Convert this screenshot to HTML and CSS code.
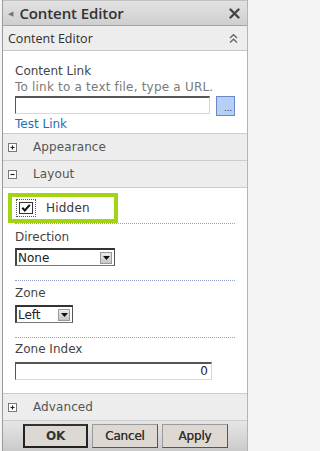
FILE: index.html
```html
<!DOCTYPE html>
<html>
<head>
<meta charset="utf-8">
<link rel="stylesheet" href="styles.css">
</head>
<body>
<div class="pane">
  <div class="titlebar">
    <span class="back">&#9664;</span>
    <span class="title">Content Editor</span>
    <svg class="close" width="11" height="11" viewBox="0 0 11 11"><path d="M1.5 1.5 L9.5 9.5 M9.5 1.5 L1.5 9.5" stroke="#444" stroke-width="2.4" stroke-linecap="round"/></svg>
  </div>
  <div class="sechead">
    <span class="sectitle">Content Editor</span>
    <svg class="chev" width="9" height="11" viewBox="0 0 9 11"><path d="M1 5 L4.5 1.8 L8 5 M1 9.5 L4.5 6.3 L8 9.5" stroke="#666" stroke-width="1.4" fill="none"/></svg>
  </div>
  <div class="content">
    <div class="label">Content Link</div>
    <div class="hint">To link to a text file, type a URL.</div>
    <div class="linkrow">
      <div class="textbox wide"></div>
      <div class="browse">...</div>
    </div>
    <div class="testlink">Test Link</div>
  </div>
  <div class="group top">
    <span class="expander">
      <svg width="9" height="9" viewBox="0 0 9 9"><rect x="0.5" y="0.5" width="8" height="8" fill="#fff" stroke="#777"/><path d="M2.5 4.5 H6.5 M4.5 2.5 V6.5" stroke="#222" stroke-width="1.2"/></svg>
    </span>
    <span class="gtitle">Appearance</span>
  </div>
  <div class="group">
    <span class="expander">
      <svg width="9" height="9" viewBox="0 0 9 9"><rect x="0.5" y="0.5" width="8" height="8" fill="#fff" stroke="#777"/><path d="M2.5 4.5 H6.5" stroke="#222" stroke-width="1.2"/></svg>
    </span>
    <span class="gtitle">Layout</span>
  </div>
  <div class="layout">
    <div class="hilite">
      <span class="cbfocus">
        <svg width="14" height="12" viewBox="0 0 14 12"><rect x="0.5" y="0.5" width="13" height="11" fill="#fff" stroke="#333"/><path d="M3.3 5.8 L5.8 8.5 L10.8 2.8" stroke="#111" stroke-width="2" fill="none"/></svg>
      </span>
      <span class="cblabel">Hidden</span>
    </div>
    <div class="dots first"></div>
    <div class="label l-direction">Direction</div>
    <div class="select sel-direction">
      <span class="selval">None</span>
      <span class="selbtn"><svg width="7" height="4" viewBox="0 0 7 4"><path d="M0 0 H7 L3.5 4 Z" fill="#111"/></svg></span>
    </div>
    <div class="dots"></div>
    <div class="label l-zone">Zone</div>
    <div class="select sel-zone">
      <span class="selval">Left</span>
      <span class="selbtn"><svg width="7" height="4" viewBox="0 0 7 4"><path d="M0 0 H7 L3.5 4 Z" fill="#111"/></svg></span>
    </div>
    <div class="dots"></div>
    <div class="label l-index">Zone Index</div>
    <div class="textbox index">0</div>
  </div>
  <div class="group top">
    <span class="expander">
      <svg width="9" height="9" viewBox="0 0 9 9"><rect x="0.5" y="0.5" width="8" height="8" fill="#fff" stroke="#777"/><path d="M2.5 4.5 H6.5 M4.5 2.5 V6.5" stroke="#222" stroke-width="1.2"/></svg>
    </span>
    <span class="gtitle">Advanced</span>
  </div>
  <div class="footer">
    <button class="btn ok">OK</button>
    <button class="btn cancel">Cancel</button>
    <button class="btn apply">Apply</button>
  </div>
</div>
</body>
</html>
```
FILE: styles.css
```css
html, body {
  margin: 0;
  padding: 0;
  background: #f4f4f4;
}
body {
  width: 250px;
  height: 451px;
  overflow: hidden;
  font-family: "DejaVu Sans", Verdana, sans-serif;
  color: #3b3b3b;
}
.pane {
  margin-left: 2px;
  width: 244px;
  height: 451px;
  background: #fff;
  border-left: 1px solid #9a9a9a;
  border-right: 1px solid #b4b4b4;
  display: flex;
  flex-direction: column;
}
.titlebar {
  height: 24px;
  background: linear-gradient(#e2e2e2, #cfcfcf);
  border-top: 1px solid #c0c0c0;
  border-bottom: 1px solid #a4a4a4;
  display: flex;
  align-items: center;
  padding-left: 5px;
  padding-right: 7px;
  flex: none;
}
.back {
  font-size: 7px;
  color: #777;
  margin-right: 6px;
  margin-top: 1px;
}
.title {
  font-family: "Open Sans", sans-serif;
  font-weight: 600;
  font-size: 15px;
  color: #333;
  flex: 1;
  letter-spacing: -0.1px;
}
.close { margin-top: 1px; }
.sechead {
  height: 24px;
  background: #ededed;
  border-bottom: 1px solid #c9c9c9;
  display: flex;
  align-items: center;
  padding-left: 5px;
  padding-right: 9px;
  flex: none;
}
.sectitle {
  font-family: "Open Sans", sans-serif;
  font-size: 12.5px;
  color: #2e2e2e;
  flex: 1;
}
.content {
  padding: 12px 0 0 12px;
  height: 82px;
  box-sizing: border-box;
  flex: none;
}
.label {
  font-size: 12px;
  line-height: 16px;
  color: #444;
}
.hint {
  font-size: 12px;
  line-height: 16px;
  color: #7a7a7a;
  letter-spacing: 0.2px;
  white-space: nowrap;
}
.linkrow {
  display: flex;
  align-items: flex-start;
  margin-top: 1px;
}
.textbox {
  height: 18px;
  box-sizing: border-box;
  background: #fff;
  border-top: 2px solid #555;
  border-left: 1px solid #555;
  border-right: 1px solid #d8d8d8;
  border-bottom: 1px solid #d8d8d8;
}
.textbox.wide { width: 195px; }
.browse {
  margin-left: 6px;
  width: 19px;
  height: 20px;
  box-sizing: border-box;
  background: #b6cff4;
  border: 1px solid #6b86c8;
  font-size: 8px;
  color: #334;
  text-align: right;
  line-height: 24px;
  padding-right: 2px;
  overflow: hidden;
}
.testlink {
  font-size: 12px;
  line-height: 16px;
  color: #1f6fb5;
}
.group {
  height: 26px;
  background: #ededed;
  border-bottom: 1px solid #cccccc;
  display: flex;
  align-items: center;
  padding-left: 5px;
  flex: none;
}
.group.top { border-top: 1px solid #cccccc; }
.expander {
  display: flex;
  width: 9px;
  height: 9px;
  margin-right: 16px;
}
.gtitle {
  font-size: 12px;
  color: #555;
  letter-spacing: 0.1px;
}
.layout {
  padding: 5px 0 0 12px;
  height: 205px;
  box-sizing: border-box;
  flex: none;
}
.hilite {
  margin-left: -7px;
  width: 110px;
  height: 30px;
  box-sizing: border-box;
  border: 4px solid #a3d414;
  display: flex;
  align-items: center;
  padding-left: 4px;
  position: relative;
  z-index: 1;
  background: #fff;
}
.cbfocus {
  display: flex;
  padding: 2px;
  border: 1px dotted #555;
  margin-right: 10px;
}
.cblabel {
  font-size: 12px;
  color: #3a3a3a;
  letter-spacing: 0.2px;
}
.dots {
  width: 220px;
  border-top: 1px dotted #8fa3cc;
  margin-top: 14px;
}
.dots.first { margin-top: 0; }
.l-direction { margin-top: 5px; }
.l-zone { margin-top: 4px; }
.l-index { margin-top: 3px; }
.select {
  height: 18px;
  box-sizing: border-box;
  border-top: 2px solid #333;
  border-left: 2px solid #444;
  border-right: 1px solid #555;
  border-bottom: 1px solid #777;
  display: flex;
  align-items: center;
  margin-top: 3px;
  background: #fff;
}
.sel-direction { width: 100px; }
.sel-zone { width: 58px; margin-top: 4px; }
.selval {
  flex: 1;
  font-size: 12px;
  padding-left: 1px;
  color: #222;
}
.selbtn {
  width: 12px;
  height: 12px;
  box-sizing: border-box;
  margin-right: 2px;
  background: linear-gradient(#ececec, #c6c6c6);
  border: 1px solid #999;
  display: flex;
  align-items: center;
  justify-content: center;
}
.textbox.index {
  width: 197px;
  margin-top: 5px;
  text-align: right;
  font-size: 12px;
  line-height: 15px;
  padding-right: 3px;
  color: #222;
}
.footer {
  flex: 1;
  background: linear-gradient(#e6e6e6, #cacaca);
  display: flex;
  align-items: flex-start;
  padding: 3px 0 0 20px;
  gap: 4px;
}
.btn {
  height: 24px;
  box-sizing: border-box;
  background: #ddd9d2;
  border: 1px solid #9a9a9a;
  border-right-color: #555;
  border-bottom-color: #555;
  font-family: "DejaVu Sans", Verdana, sans-serif;
  font-size: 12px;
  font-weight: bold;
  color: #333;
  padding: 0;
  letter-spacing: -0.2px;
}
.btn.ok {
  width: 65px;
  border: 2px solid #222;
  border-top-color: #333;
}
.btn.cancel { width: 66px; font-weight: normal; text-shadow: 0 0 0.4px #333; }
.btn.apply { width: 66px; font-weight: normal; text-shadow: 0 0 0.4px #333; }
```
